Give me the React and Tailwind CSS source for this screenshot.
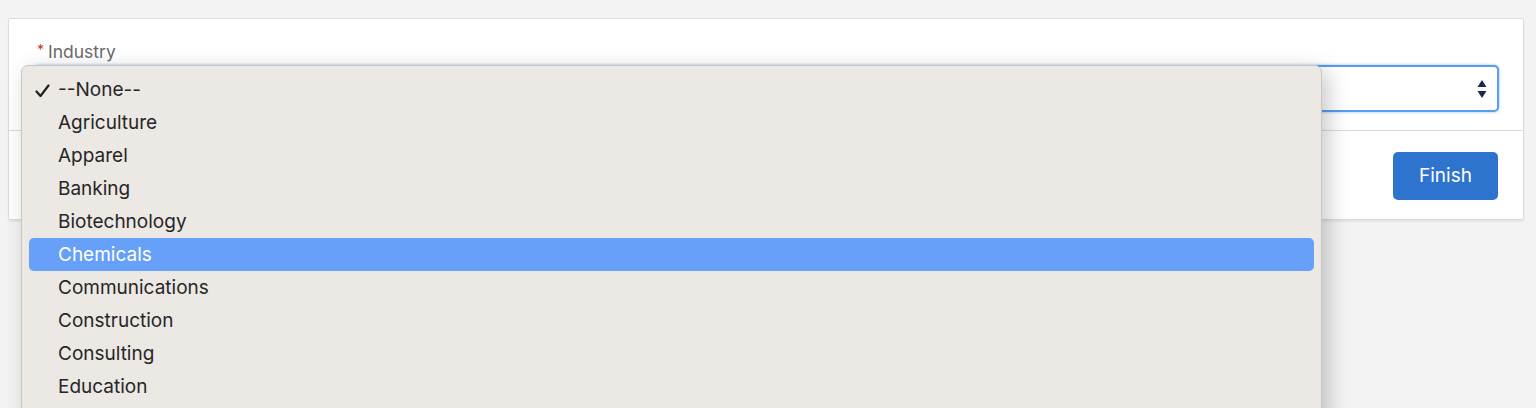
import React from "react";

const industries = [
  "--None--",
  "Agriculture",
  "Apparel",
  "Banking",
  "Biotechnology",
  "Chemicals",
  "Communications",
  "Construction",
  "Consulting",
  "Education",
];

const font = { fontFamily: "Inter, 'Liberation Sans', sans-serif" };

const App = () => {
  const selected = "--None--";
  const hovered = "Chemicals";

  return (
    <div className="h-[408px] overflow-hidden bg-[#f3f3f3] pt-[18px] pl-2 pr-3" style={font}>
      <div className="bg-white border border-[#dddbda] rounded-[2px] shadow-[0_2px_2px_rgba(0,0,0,0.06)] w-[1516px]">
        {/* Field */}
        <div className="px-6 pt-[23px] pb-[18px] border-b border-[#dddbda]">
          <label className="flex items-center text-[17.5px] leading-5 text-[#6b6b6b] pl-1">
            <span className="text-[#c23934] text-[14px] mr-[4px] -mt-[4px]">*</span>
            Industry
          </label>
          <div className="relative mt-[3px]">
            <div className="h-[47px] rounded-[5px] border-2 border-[#5a9cf0] shadow-[0_0_3px_#8fbcf5] bg-white flex items-center justify-end pr-[10px]">
              <svg width="10" height="22" viewBox="0 0 10 22" className="text-[#1b2a4a]">
                <path d="M5 2 L9.5 9 L0.5 9 Z" fill="currentColor" />
                <path d="M0.5 13 L9.5 13 L5 20 Z" fill="currentColor" />
              </svg>
            </div>

            {/* Open native-style menu */}
            <div className="absolute left-[-12px] top-0 w-[1301px] h-[360px] bg-[#ece8e4] rounded-t-[7px] border border-[#c9c5c1] shadow-[6px_6px_22px_rgba(0,0,0,0.22)] pt-[7px] px-[7px] z-10">
              {industries.map((name) => {
                const isHover = name === hovered;
                return (
                  <div
                    key={name}
                    className={`h-[33px] flex items-center pt-[2px] rounded-[5px] text-[19px] ${
                      isHover ? "bg-[#66a0f8] text-white" : "text-[#262626]"
                    }`}
                  >
                    <span className="w-[29px] flex justify-end pr-[8px]">
                      {name === selected && (
                        <svg width="15" height="14" viewBox="0 0 15 14">
                          <path
                            d="M1.5 7.5 L5.5 12 L13.5 1.5"
                            fill="none"
                            stroke="#1f1f1f"
                            strokeWidth="2.2"
                            strokeLinecap="round"
                            strokeLinejoin="round"
                          />
                        </svg>
                      )}
                    </span>
                    {name}
                  </div>
                );
              })}
            </div>
          </div>
        </div>

        {/* Footer */}
        <div className="flex justify-end items-center h-[88px] pr-[25px] pt-[2px]">
          <button className="w-[105px] h-[48px] rounded-[5px] bg-[#2e74cf] text-white text-[19px]">
            Finish
          </button>
        </div>
      </div>
    </div>
  );
};

export default App;
